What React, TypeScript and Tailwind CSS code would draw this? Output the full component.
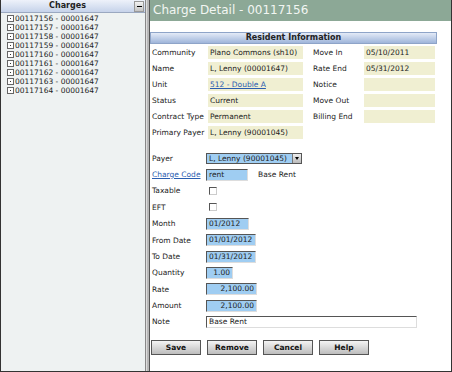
import React from 'react';

const font = "font-['DejaVu_Sans',Verdana,sans-serif]";

const charges = [
  '00117156', '00117157', '00117158', '00117159', '00117160',
  '00117161', '00117162', '00117163', '00117164',
];

const Field: React.FC<{ w: string; value: string; right?: boolean; white?: boolean }> = ({ w, value, right, white }) => (
  <div
    className={`${w} h-[12px] border-t border-l border-t-[#555] border-l-[#555] border-b border-r border-b-[#ddd] border-r-[#ddd] px-[2px] leading-[10px] ${right ? 'text-right' : ''} ${white ? 'bg-white' : 'bg-[#9fcdf2]'}`}
  >
    {value}
  </div>
);

const Button: React.FC<{ label: string }> = ({ label }) => (
  <div className="w-[50px] h-[15px] border border-[#555] bg-gradient-to-b from-[#f4f4f4] to-[#bdbdbd] flex items-center justify-center font-bold text-[7.5px] text-[#111]">
    {label}
  </div>
);

export default function App() {
  const resident = [
    ['Community', 'Plano Commons (sh10)', 'Move In', '05/10/2011'],
    ['Name', 'L, Lenny (00001647)', 'Rate End', '05/31/2012'],
    ['Unit', '512 - Double A', 'Notice', ''],
    ['Status', 'Current', 'Move Out', ''],
    ['Contract Type', 'Permanent', 'Billing End', ''],
    ['Primary Payer', 'L, Lenny (90001045)', null, null],
  ];

  return (
    <div className={`${font} w-[452px] h-[372px] flex border-l border-r border-b border-[#333] text-[7.5px] text-[#222] overflow-hidden`}>
      {/* left panel */}
      <div className="w-[145px] flex flex-col bg-[#eef2f2] border-r border-[#888]">
        <div className="h-[13px] flex bg-gradient-to-b from-[#eef2fa] to-[#c6d3ea] border-b border-[#9aa8c0]">
          <div className="flex-1 text-center font-bold text-[8px] leading-[12px] text-[#222]">Charges</div>
          <div className="w-[10px] h-[11px] mt-[1px] mr-[1px] bg-gradient-to-b from-[#f2f2f2] to-[#c4c4c4] border border-[#999] flex items-center justify-center">
            <div className="w-[5px] h-[1.5px] bg-black" />
          </div>
        </div>
        <div className="pt-[1px] pl-[6px]">
          {charges.map((c) => (
            <div key={c} className="h-[9px] flex items-center gap-[1px] leading-[9px]">
              <div className="w-[7px] h-[7px] border border-[#666] bg-white flex items-center justify-center">
                <div className="w-[1px] h-[1px] bg-[#333]" />
              </div>
              <span>{c} - 00001647</span>
            </div>
          ))}
        </div>
      </div>
      {/* splitter */}
      <div className="w-[4px] bg-[#b8b8b8] border-l border-r border-l-[#ddd] border-r-[#555]" />
      {/* right panel */}
      <div className="flex-1 flex flex-col bg-white">
        <div className="h-[21px] bg-[#8ca896] text-[#f2f6f2] text-[12px] leading-[21px] pl-[3px]">
          Charge Detail - 00117156
        </div>
        <div className="mt-[11px] w-[287px] h-[12px] bg-gradient-to-b from-[#e4ebf7] to-[#9fb5da] border border-[#8ea4c8] text-center font-bold text-[8px] leading-[10px]">
          Resident Information
        </div>
        <div className="mt-[2px] flex flex-col gap-[3px] pl-[2px]">
          {resident.map(([l1, v1, l2, v2]) => (
            <div key={l1 as string} className="flex h-[13px] leading-[13px]">
              <div className="w-[56px]">{l1}</div>
              <div className="w-[95px] bg-[#f0efd2] pl-[2px]">
                {l1 === 'Unit' ? <span className="text-[#2a5db0] underline">{v1}</span> : v1}
              </div>
              {l2 !== null && (
                <>
                  <div className="w-[52px] ml-[9px] pl-[1px]">{l2}</div>
                  <div className="w-[71px] bg-[#f0efd2] pl-[2px]">{v2}</div>
                </>
              )}
            </div>
          ))}
        </div>
        <div className="mt-[11px] pl-[2px] flex flex-col">
          <div className="h-[16.4px] flex items-center">
            <div className="w-[54px]">Payer</div>
            <div className="w-[96px] h-[11px] bg-[#9fcdf2] border border-[#555] flex items-center">
              <span className="flex-1 pl-[2px]">L, Lenny (90001045)</span>
              <div className="w-[9px] h-[9px] bg-gradient-to-b from-[#eee] to-[#bbb] border-l border-[#777] flex items-center justify-center">
                <div className="w-0 h-0 border-l-[2.5px] border-r-[2.5px] border-t-[3px] border-l-transparent border-r-transparent border-t-black" />
              </div>
            </div>
          </div>
          <div className="h-[16.4px] flex items-center">
            <div className="w-[54px] text-[#2a5db0] underline">Charge Code</div>
            <Field w="w-[42px]" value="rent" />
            <div className="ml-[10px]">Base Rent</div>
          </div>
          {['Taxable', 'EFT'].map((l) => (
            <div key={l} className="h-[16.4px] flex items-center">
              <div className="w-[57px]">{l}</div>
              <div className="w-[8px] h-[8px] border border-t-[#555] border-l-[#555] border-b-[#ccc] border-r-[#ccc] bg-white" />
            </div>
          ))}
          <div className="h-[16.4px] flex items-center">
            <div className="w-[54px]">Month</div>
            <Field w="w-[43px]" value="01/2012" />
          </div>
          <div className="h-[16.4px] flex items-center">
            <div className="w-[54px]">From Date</div>
            <Field w="w-[50px]" value="01/01/2012" />
          </div>
          <div className="h-[16.4px] flex items-center">
            <div className="w-[54px]">To Date</div>
            <Field w="w-[50px]" value="01/31/2012" />
          </div>
          <div className="h-[16.4px] flex items-center">
            <div className="w-[54px]">Quantity</div>
            <Field w="w-[27px]" value="1.00" right />
          </div>
          <div className="h-[16.4px] flex items-center">
            <div className="w-[54px]">Rate</div>
            <Field w="w-[51px]" value="2,100.00" right />
          </div>
          <div className="h-[16.4px] flex items-center">
            <div className="w-[54px]">Amount</div>
            <Field w="w-[51px]" value="2,100.00" right />
          </div>
          <div className="h-[16.4px] flex items-center">
            <div className="w-[54px]">Note</div>
            <Field w="w-[211px]" value="Base Rent" white />
          </div>
        </div>
        <div className="mt-[10px] pl-[1px] flex gap-[6px]">
          <Button label="Save" />
          <Button label="Remove" />
          <Button label="Cancel" />
          <Button label="Help" />
        </div>
      </div>
    </div>
  );
}
